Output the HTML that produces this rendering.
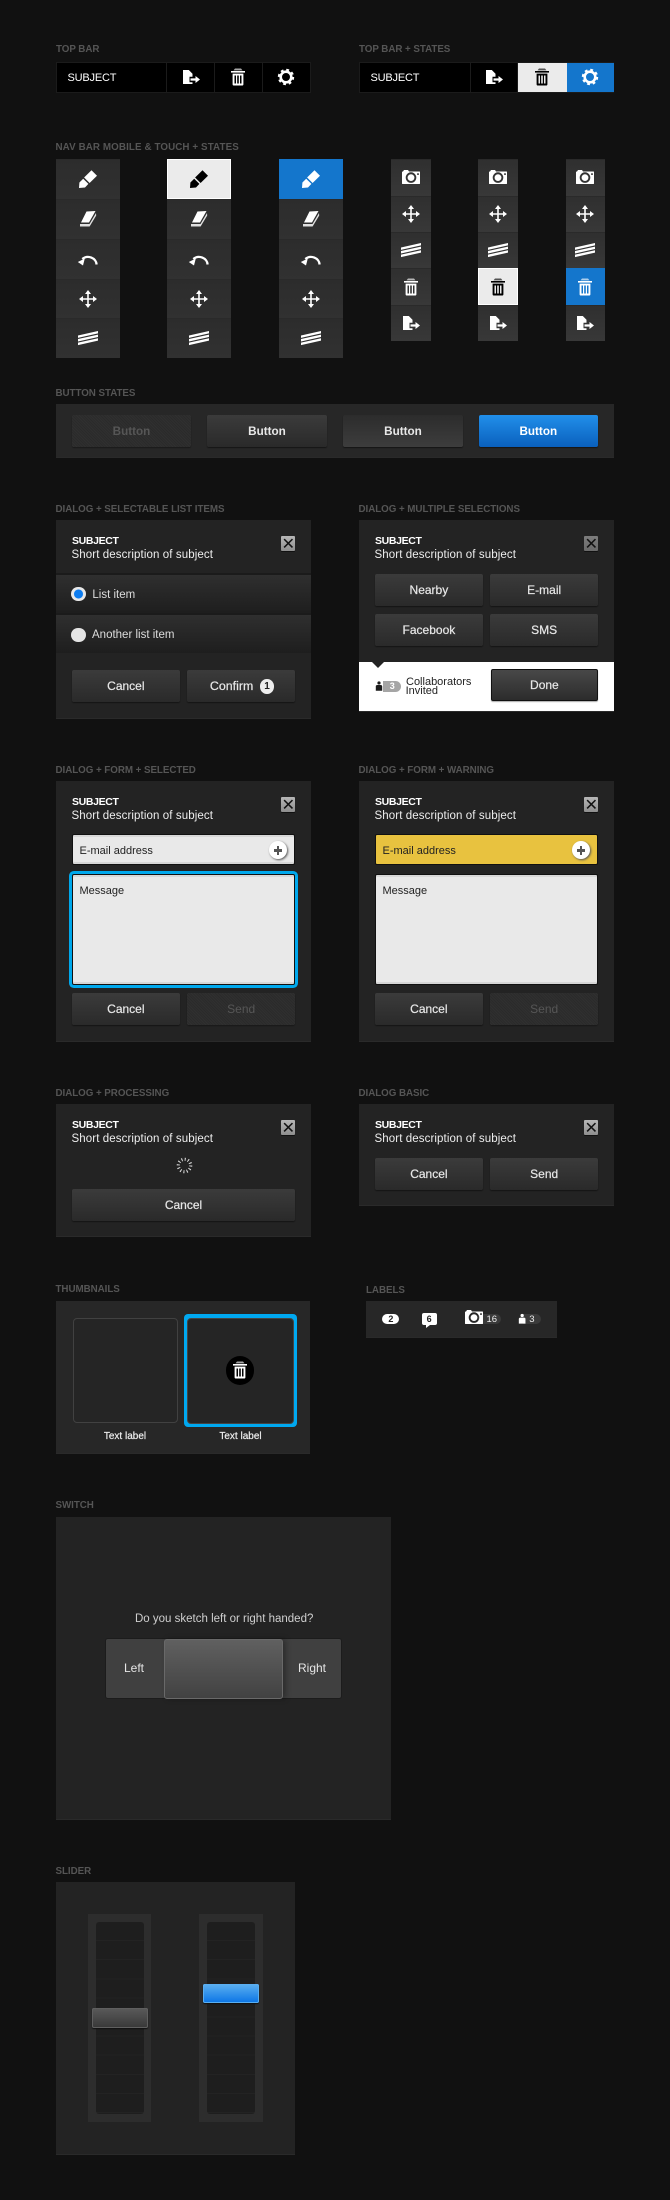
<!DOCTYPE html>
<html lang="en"><head><meta charset="utf-8"><title>UI Kit</title>
<style>
html,body{margin:0;padding:0;background:#111}
body{width:670px;height:2200px;position:relative;overflow:hidden;font-family:"Liberation Sans",Arial,sans-serif;color:#e6e6e6}
div,span,svg{box-sizing:border-box}
.a,.t,.lb,.i{position:absolute}
.t,.lb{white-space:nowrap;line-height:14px}
.lb{font-size:9.8px;font-weight:bold;color:#555;letter-spacing:-.05px;line-height:12px;margin-top:1.4px}
.i{width:24px;height:24px;fill:currentColor;color:#fff}
.p{position:absolute;background:#232323;box-shadow:0 1px 0 #2a2a2a}
.bar{position:absolute;top:62px;width:255px;height:30.5px;background:#000;border:1px solid #1b1b1b}
.bar div{position:absolute;top:0;height:100%;border-right:1px solid #1b1b1b;display:flex;align-items:center;justify-content:center}
.bar svg{position:static}
.col{position:absolute;top:159.3px;width:64px}
.col div{height:39.8px;display:flex;align-items:center;justify-content:center;background:linear-gradient(#2c2c2c,#313131);box-shadow:inset 0 1px 0 #2a2a2a}
.sm{width:39.8px}
.sm div{height:36.4px;background:linear-gradient(#2f2f2f,#383838)}
.col svg{position:static}
.w{background:#ebebeb!important;border:1px solid #fff;box-shadow:0 1px 0 #222!important}
.w svg{color:#000}
.bl{background:#1476cc!important;box-shadow:none!important}
.b{position:absolute;height:32px;border-radius:2px;text-align:center;line-height:33px;font-size:12px;color:#e8e8e8;background:linear-gradient(#3b3b3b,#2a2a2a);box-shadow:0 1px 1px #151515;-webkit-text-stroke:.2px #e8e8e8}
.pr{background:linear-gradient(#2c2c2c,#3d3d3d)}
.dis{background:repeating-linear-gradient(45deg,#2a2a2a 0 1px,#303030 1px 2px);color:#565656;-webkit-text-stroke:0;box-shadow:0 1px 1px #1a1a1a}
.blu{background:linear-gradient(#218fea,#0a60bd);color:#fff;-webkit-text-stroke:.3px #fff}
.bt{font-size:11.7px;font-weight:bold;-webkit-text-stroke:0}
.s1{left:16px;top:13.5px;font-size:10.5px;font-weight:bold;letter-spacing:-.35px;color:#fff}
.s2{left:15.5px;top:28px;font-size:11.5px;letter-spacing:.1px;color:#eee}
.x{position:absolute;left:224.7px;top:16px;width:14.6px;height:14.6px;border-radius:1px;background:linear-gradient(#b6b6b6,#8e8e8e);box-shadow:0 1px 0 #111}
.x.dk{background:linear-gradient(#7d7d7d,#6a6a6a)}
.x svg{display:block;width:100%;height:100%;fill:none;stroke:#111;stroke-width:1.5}
.li{position:absolute;left:0;width:255px;height:38.3px;background:linear-gradient(#2f2f2f,#1e1e1e);box-shadow:0 -2px 0 #1b1b1b}
.r{position:absolute;left:15.2px;width:14.4px;height:14.4px;border-radius:50%;background:#e4e4e4}
.inp{position:absolute;left:16px;width:223px;background:#e9e9e9;border:1.5px solid #111;border-radius:2px;box-shadow:inset 0 -2px 0 #d6d6d6,inset 0 2px 0 #d8d8d8;font-size:11px;color:#222}
.inp span{position:absolute;left:6.5px;top:9px;line-height:14px;white-space:nowrap}
.pl{position:absolute;left:196px;top:6.5px;width:18px;height:18px;border-radius:50%;background:#fff;box-shadow:1px 1px 2px #555}
.pl:before{content:"";position:absolute;left:4.8px;top:7.8px;width:8.4px;height:2.4px;background:#555}
.pl:after{content:"";position:absolute;left:7.8px;top:4.8px;width:2.4px;height:8.4px;background:#555}
.pi{position:absolute;width:63.3px;top:1914.3px;height:207.4px;background:#2d2d2d}
.tr{position:absolute;left:8px;top:8px;width:48px;height:191.4px;border-radius:3px;background:repeating-linear-gradient(to bottom,#1e1e1e 0,#1e1e1e 18.1px,#232323 18.1px,#232323 19.1px)}
.h{position:absolute;width:56px;height:20px;border-radius:2px}
</style></head>
<body>
<svg width="0" height="0" style="position:absolute">
<defs>
<symbol id="pen" viewBox="0 0 24 24"><path d="M15.5 3.2 21 8.7 13.6 16 8.1 10.5Z"/><path d="M7.2 11.7 12.4 16.9 9 20.5 3 21 3.4 15.5Z"/></symbol>
<symbol id="era" viewBox="0 0 24 24"><path d="M10.5 4.5 19.5 4 13 15.5H5Z"/><path d="M4 17H13.5L20 6 20.2 8.5 13.6 19.5H4Z" opacity=".85"/></symbol>
<symbol id="und" viewBox="0 0 24 24"><path d="M20.6 17.5A8.6 8 0 0 0 6.3 12" fill="none" stroke="currentColor" stroke-width="2.3"/><path d="M1.8 15 8.8 11.5 7 18.5Z"/></symbol>
<symbol id="mov" viewBox="0 0 24 24"><path d="M11.2 6.5H12.8V11.2H17.5V12.8H12.8V17.5H11.2V12.8H6.5V11.2H11.2Z"/><path d="M12 3 15 7H9ZM12 21 15 17H9ZM3 12 7 9V15ZM21 12 17 9V15Z"/></symbol>
<symbol id="lay" viewBox="0 0 24 24"><path d="M2 9.5 22 5V7.4L2 11.9ZM2 13 22 8.6V11L2 15.5ZM2 16.6 22 12.2V14.6L2 19.1Z"/></symbol>
<symbol id="cam" viewBox="0 0 24 24"><path fill-rule="evenodd" d="M4 6.5 5 5H9L10 6.5H20.5Q21 6.5 21 7V18.5Q21 19 20.5 19H3.5Q3 19 3 18.5V7Q3 6.5 4 6.5ZM12 7.3A5.3 5.3 0 1 0 12.01 7.3ZM18.2 8.2V10H19.8V8.2Z"/><circle cx="12" cy="12.6" r="3.4"/></symbol>
<symbol id="tra" viewBox="0 0 24 24"><path d="M9 3.5H15L16.5 5.4H7.5Z" opacity=".65"/><path d="M5 6H19V7.6H5Z"/><path fill-rule="evenodd" d="M6.6 8.6H17.4V19.2Q17.4 20.5 16 20.5H8Q6.6 20.5 6.6 19.2ZM8.5 10.5V18.5H10V10.5ZM11.2 10.5V18.5H12.8V10.5ZM14 10.5V18.5H15.5V10.5Z"/></symbol>
<symbol id="exp" viewBox="0 0 24 24"><path d="M4 5H9.8L13.5 8.8V11.7H10.5V17.3H13.5V19H4Z"/><path d="M11.5 13.4H16.5V11L21 14.5 16.5 18V15.6H11.5Z"/></symbol>
<symbol id="gea" viewBox="0 0 24 24"><circle cx="12" cy="12" r="5.3" fill="none" stroke="currentColor" stroke-width="2.6"/><circle cx="12" cy="12" r="7.2" fill="none" stroke="currentColor" stroke-width="2" stroke-dasharray="2.83 2.83"/></symbol>
<symbol id="per" viewBox="0 0 10 12"><circle cx="5" cy="2.2" r="2"/><path d="M1 12V6.5Q1 4.8 3 4.8H7Q9 4.8 9 6.5V12Z"/></symbol>
</defs></svg>

<!-- TOP BARS -->
<div class="lb" style="left:56px;top:43px">TOP BAR</div>
<div class="lb" style="left:359px;top:43px">TOP BAR + STATES</div>
<div class="bar" style="left:56px">
<div style="left:0;width:110px;justify-content:flex-start;padding:1px 0 0 10.5px;font-size:11px;letter-spacing:-.2px;color:#fff">SUBJECT</div>
<div style="left:110px;width:48px"><svg class="i"><use href="#exp"/></svg></div>
<div style="left:158px;width:47.5px"><svg class="i"><use href="#tra"/></svg></div>
<div style="left:205.5px;width:47.5px;border:0"><svg class="i"><use href="#gea"/></svg></div>
</div>
<div class="bar" style="left:359px">
<div style="left:0;width:110.5px;justify-content:flex-start;padding:1px 0 0 10.5px;font-size:11px;letter-spacing:-.2px;color:#fff">SUBJECT</div>
<div style="left:110.5px;width:47.5px"><svg class="i"><use href="#exp"/></svg></div>
<div style="left:158px;width:48.5px;background:#ebebeb;border:0"><svg class="i" style="color:#000"><use href="#tra"/></svg></div>
<div style="left:206.5px;width:47px;background:#1476cc;border:0"><svg class="i"><use href="#gea"/></svg></div>
</div>

<!-- NAV -->
<div class="lb" style="left:55.5px;top:141px;letter-spacing:.1px">NAV BAR MOBILE &amp; TOUCH + STATES</div>
<div class="col" style="left:56px">
<div><svg class="i"><use href="#pen"/></svg></div><div><svg class="i"><use href="#era"/></svg></div><div><svg class="i"><use href="#und"/></svg></div><div><svg class="i"><use href="#mov"/></svg></div><div><svg class="i"><use href="#lay"/></svg></div>
</div>
<div class="col" style="left:167.4px">
<div class="w"><svg class="i"><use href="#pen"/></svg></div><div><svg class="i"><use href="#era"/></svg></div><div><svg class="i"><use href="#und"/></svg></div><div><svg class="i"><use href="#mov"/></svg></div><div><svg class="i"><use href="#lay"/></svg></div>
</div>
<div class="col" style="left:279.2px">
<div class="bl"><svg class="i"><use href="#pen"/></svg></div><div><svg class="i"><use href="#era"/></svg></div><div><svg class="i"><use href="#und"/></svg></div><div><svg class="i"><use href="#mov"/></svg></div><div><svg class="i"><use href="#lay"/></svg></div>
</div>
<div class="col sm" style="left:391px">
<div><svg class="i"><use href="#cam"/></svg></div><div><svg class="i"><use href="#mov"/></svg></div><div><svg class="i"><use href="#lay"/></svg></div><div><svg class="i"><use href="#tra"/></svg></div><div><svg class="i"><use href="#exp"/></svg></div>
</div>
<div class="col sm" style="left:477.8px">
<div><svg class="i"><use href="#cam"/></svg></div><div><svg class="i"><use href="#mov"/></svg></div><div><svg class="i"><use href="#lay"/></svg></div><div class="w"><svg class="i"><use href="#tra"/></svg></div><div><svg class="i"><use href="#exp"/></svg></div>
</div>
<div class="col sm" style="left:565.5px">
<div><svg class="i"><use href="#cam"/></svg></div><div><svg class="i"><use href="#mov"/></svg></div><div><svg class="i"><use href="#lay"/></svg></div><div class="bl"><svg class="i"><use href="#tra"/></svg></div><div><svg class="i"><use href="#exp"/></svg></div>
</div>

<!-- BUTTON STATES -->
<div class="lb" style="left:55.5px;top:387px">BUTTON STATES</div>
<div class="p" style="left:56px;top:404px;width:558px;height:53.3px;background:#272727">
<div class="b dis bt" style="left:16px;top:11px;width:119px">Button</div>
<div class="b bt" style="left:151px;top:11px;width:120px">Button</div>
<div class="b pr bt" style="left:287px;top:11px;width:120px">Button</div>
<div class="b blu bt" style="left:422.6px;top:11px;width:119.4px">Button</div>
</div>

<!-- DIALOG LIST -->
<div class="lb" style="left:55.5px;top:502.7px">DIALOG + SELECTABLE LIST ITEMS</div>
<div class="lb" style="left:358.5px;top:502.7px">DIALOG + MULTIPLE SELECTIONS</div>
<div class="p" style="left:56px;top:520px;width:255px;height:198.3px">
<div class="t s1">SUBJECT</div><div class="t s2">Short description of subject</div>
<div class="x"><svg viewBox="0 0 14 14"><path d="M3 3 11 11M11 3 3 11"/></svg></div>
<div class="li" style="top:55px"></div>
<div class="r" style="top:66.8px;background:radial-gradient(circle,#0c7cf0 0 4.2px,#e8e8e8 4.8px)"></div>
<div class="t" style="left:36.4px;top:68px;font-size:11.5px;color:#ddd">List item</div>
<div class="li" style="top:95px"></div>
<div class="r" style="top:107.5px"></div>
<div class="t" style="left:36px;top:108px;font-size:11.5px;color:#ddd">Another list item</div>
<div class="b" style="left:16px;top:150px;width:107.7px">Cancel</div>
<div class="b" style="left:131.4px;top:150px;width:107.6px;text-align:left;padding-left:22.5px;font-size:12.4px">Confirm</div>
<div class="a" style="left:204.3px;top:159px;width:13.5px;height:14.5px;border-radius:50%;background:#eee;color:#222;font-size:10px;font-weight:bold;text-align:center;line-height:15px">1</div>
</div>
<div class="p" style="left:359px;top:520px;width:255px;height:190.7px">
<div class="t s1">SUBJECT</div><div class="t s2">Short description of subject</div>
<div class="x dk"><svg viewBox="0 0 14 14"><path d="M3 3 11 11M11 3 3 11"/></svg></div>
<div class="b" style="left:16px;top:54px;width:107.8px">Nearby</div>
<div class="b" style="left:131.4px;top:54px;width:107.6px">E-mail</div>
<div class="b" style="left:16px;top:93.7px;width:107.8px">Facebook</div>
<div class="b" style="left:131.4px;top:93.7px;width:107.6px">SMS</div>
<div class="a" style="left:0;top:141.7px;width:255px;height:49px;background:#fff"></div>
<div class="a" style="left:13px;top:141.7px;width:0;height:0;border-left:6px solid transparent;border-right:6px solid transparent;border-top:6px solid #232323"></div>
<div class="a" style="left:24px;top:160.7px;width:17.5px;height:11.3px;border-radius:0 6px 6px 0;background:#a5a5a5;color:#fff;font-size:9px;font-weight:bold;text-align:center;line-height:11.5px;padding-left:1px">3</div>
<svg class="i" style="left:16px;top:160px;width:8px;height:12px;color:#1c1c1c"><use href="#per"/></svg>
<div class="t" style="left:47px;top:155px;font-size:11px;color:#222">Collaborators</div>
<div class="t" style="left:46.6px;top:164.4px;font-size:11px;color:#222">Invited</div>
<div class="b" style="left:131.8px;top:149.3px;width:107.2px;border:1px solid #111;background:linear-gradient(#484848,#2c2c2c);line-height:31px;box-shadow:0 1px 1px #aaa">Done</div>
</div>

<!-- DIALOG FORM -->
<div class="lb" style="left:55.5px;top:763.7px">DIALOG + FORM + SELECTED</div>
<div class="lb" style="left:358.5px;top:763.7px">DIALOG + FORM + WARNING</div>
<div class="p" style="left:56px;top:781.3px;width:255px;height:259.7px">
<div class="t s1">SUBJECT</div><div class="t s2">Short description of subject</div>
<div class="x"><svg viewBox="0 0 14 14"><path d="M3 3 11 11M11 3 3 11"/></svg></div>
<div class="inp" style="top:52.7px;height:31.3px"><span>E-mail address</span><div class="pl"></div></div>
<div class="inp" style="top:92.7px;height:111.3px;box-shadow:0 0 0 3px #00a8ec,inset 0 -2px 0 #d6d6d6,inset 0 2px 0 #d8d8d8"><span>Message</span></div>
<div class="b" style="left:16px;top:212px;width:107.7px">Cancel</div>
<div class="b dis" style="left:131.4px;top:212px;width:107.6px">Send</div>
</div>
<div class="p" style="left:359px;top:781.3px;width:255px;height:259.7px">
<div class="t s1">SUBJECT</div><div class="t s2">Short description of subject</div>
<div class="x"><svg viewBox="0 0 14 14"><path d="M3 3 11 11M11 3 3 11"/></svg></div>
<div class="inp" style="top:52.7px;height:31.3px;background:#e8c23f;box-shadow:none"><span>E-mail address</span><div class="pl"></div></div>
<div class="inp" style="top:92.7px;height:111.3px"><span>Message</span></div>
<div class="b" style="left:16px;top:212px;width:107.7px">Cancel</div>
<div class="b dis" style="left:131.4px;top:212px;width:107.6px">Send</div>
</div>

<!-- PROCESSING / BASIC -->
<div class="lb" style="left:55.5px;top:1086.7px">DIALOG + PROCESSING</div>
<div class="lb" style="left:358.5px;top:1086.7px">DIALOG BASIC</div>
<div class="p" style="left:56px;top:1104px;width:255px;height:132px">
<div class="t s1">SUBJECT</div><div class="t s2">Short description of subject</div>
<div class="x"><svg viewBox="0 0 14 14"><path d="M3 3 11 11M11 3 3 11"/></svg></div>
<svg class="a" style="left:119.5px;top:52.5px;width:17px;height:17px" viewBox="0 0 17 17"><circle cx="8.5" cy="8.5" r="6.2" fill="none" stroke="#ddd" stroke-width="3.2" stroke-dasharray="1 2.25"/></svg>
<div class="b" style="left:16px;top:84.7px;width:223px">Cancel</div>
</div>
<div class="p" style="left:359px;top:1104px;width:255px;height:101.3px">
<div class="t s1">SUBJECT</div><div class="t s2">Short description of subject</div>
<div class="x"><svg viewBox="0 0 14 14"><path d="M3 3 11 11M11 3 3 11"/></svg></div>
<div class="b" style="left:16px;top:53.7px;width:107.8px">Cancel</div>
<div class="b" style="left:131.4px;top:53.7px;width:107.6px">Send</div>
</div>

<!-- THUMBNAILS -->
<div class="lb" style="left:55.5px;top:1283px">THUMBNAILS</div>
<div class="p" style="left:56px;top:1301.3px;width:254px;height:152px;background:#272727"></div>
<div class="a" style="left:72.5px;top:1318px;width:105.5px;height:105.3px;border:1px solid #414141;border-radius:4px;background:#252525"></div>
<div class="a" style="left:184px;top:1314px;width:113px;height:113px;border-radius:4px;background:#00a8f0"></div>
<div class="a" style="left:187.3px;top:1317.7px;width:106.4px;height:106px;border:1px solid #444;border-radius:4px;background:#252525"></div>
<div class="a" style="left:225.7px;top:1356px;width:28.7px;height:28.7px;border-radius:50%;background:#000"></div>
<svg class="i" style="left:228px;top:1358px"><use href="#tra"/></svg>
<div class="t" style="left:72px;top:1430px;width:106px;text-align:center;font-size:10px;color:#eee;-webkit-text-stroke:.2px #eee">Text label</div>
<div class="t" style="left:187.5px;top:1430px;width:106px;text-align:center;font-size:10px;color:#eee;-webkit-text-stroke:.2px #eee">Text label</div>

<!-- LABELS -->
<div class="lb" style="left:366px;top:1284px">LABELS</div>
<div class="p" style="left:366px;top:1301.3px;width:191px;height:35.7px;background:#272727"></div>
<div class="a" style="left:382.4px;top:1314px;width:17px;height:10px;border-radius:5px;background:#fff;color:#222;font-size:9px;font-weight:bold;text-align:center;line-height:10.5px">2</div>
<div class="a" style="left:421.7px;top:1313px;width:15px;height:12px;border-radius:2px;background:#fff;color:#222;font-size:9px;font-weight:bold;text-align:center;line-height:12.5px">6</div>
<div class="a" style="left:426px;top:1325px;width:0;height:0;border-left:4px solid #fff;border-right:1px solid transparent;border-bottom:3px solid transparent"></div>
<div class="a" style="left:478px;top:1313.7px;width:23px;height:10.6px;border-radius:0 5.5px 5.5px 0;background:#3a3a3a;color:#eee;font-size:9.5px;line-height:11px;padding-left:8.5px">16</div>
<svg class="i" style="left:461.5px;top:1305px;color:#fff"><use href="#cam"/></svg>
<div class="a" style="left:523px;top:1313.7px;width:18px;height:10.6px;border-radius:0 5.5px 5.5px 0;background:#3a3a3a;color:#eee;font-size:9.5px;line-height:11px;padding-left:6.3px">3</div>
<svg class="i" style="left:517.5px;top:1313px;width:8.3px;height:11.3px"><use href="#per"/></svg>

<!-- SWITCH -->
<div class="lb" style="left:55.5px;top:1499px">SWITCH</div>
<div class="p" style="left:56px;top:1516.7px;width:335px;height:302.6px"></div>
<div class="t" style="left:135px;top:1611.7px;font-size:11.5px;color:#cfcfcf">Do you sketch left or right handed?</div>
<div class="a" style="left:105px;top:1638.3px;width:236.7px;height:61px;border:1px solid #1c1c1c;border-radius:3px;background:#404040"></div>
<div class="a" style="left:163.7px;top:1638.6px;width:119.3px;height:60.4px;border:1px solid #696969;border-radius:3px;background:linear-gradient(#606060,#424242);box-shadow:3px 0 6px rgba(0,0,0,.3)"></div>
<div class="t" style="left:105px;top:1661.3px;width:58px;text-align:center;font-size:12px;color:#e6e6e6">Left</div>
<div class="t" style="left:283px;top:1661.3px;width:58px;text-align:center;font-size:12px;color:#e6e6e6">Right</div>

<!-- SLIDER -->
<div class="lb" style="left:55.5px;top:1865px">SLIDER</div>
<div class="p" style="left:56px;top:1882.3px;width:239px;height:271.4px"></div>
<div class="pi" style="left:87.7px"><div class="tr"></div></div>
<div class="pi" style="left:199.3px"><div class="tr"></div></div>
<div class="h" style="left:91.7px;top:2008.3px;background:linear-gradient(#5a5a5a,#383838);box-shadow:inset 0 0 0 1px #5f5f5f,0 1px 1px #111"></div>
<div class="h" style="left:203.3px;top:1983.7px;height:19.3px;background:linear-gradient(#5cb0f0,#0a74e6);box-shadow:inset 0 0 0 1px #5aaef0,0 1px 1px #111"></div>
</body></html>
